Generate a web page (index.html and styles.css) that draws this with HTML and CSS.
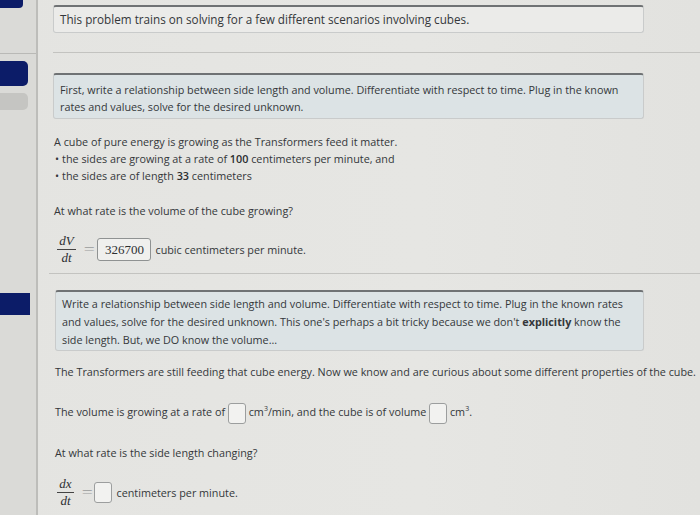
FILE: index.html
```html
<!DOCTYPE html>
<html>
<head>
<meta charset="utf-8">
<link rel="stylesheet" href="styles.css">
</head>
<body>
<div class="page">
  <nav class="sidebar">
    <div class="tab tab-top"></div>
    <div class="side-rule"></div>
    <div class="tab tab-active"></div>
    <div class="tab tab-grey"></div>
    <div class="tab tab-current"></div>
  </nav>
  <main class="content">
    <section class="part part-intro">
      <div class="box intro">This problem trains on solving for a few different scenarios involving cubes.</div>
    </section>
    <hr class="divider divider-1">
    <section class="part part-one">
      <div class="box hint">First, write a relationship between side length and volume. Differentiate with respect to time. Plug in the known rates and values, solve for the desired unknown.</div>
      <div class="text">
        <p class="line">A cube of pure energy is growing as the Transformers feed it matter.</p>
        <ul class="bullets">
          <li>the sides are growing at a rate of <b class="num">100</b> centimeters per minute, and</li>
          <li>the sides are of length <b class="num">33</b> centimeters</li>
        </ul>
        <p class="question">At what rate is the volume of the cube growing?</p>
        <div class="answer">
          <span class="frac"><span class="numr">dV</span><span class="den">dt</span></span>
          <span class="eq">=</span>
          <span class="input filled">326700</span>
          <span class="unit">cubic centimeters per minute.</span>
        </div>
      </div>
    </section>
    <hr class="divider divider-2">
    <section class="part part-two">
      <div class="box hint hint-2">Write a relationship between side length and volume. Differentiate with respect to time. Plug in the known rates<br>and values, solve for the desired unknown. This one's perhaps a bit tricky because we don't <strong class="em">explicitly</strong> know the<br>side length. But, we DO know the volume...</div>
      <p class="line line-2">The Transformers are still feeding that cube energy. Now we know and are curious about some different properties of the cube.</p>
      <p class="given">The volume is growing at a rate of <span class="input empty"></span> cm<sup>3</sup>/min, and the cube is of volume <span class="input empty"></span> cm<sup>3</sup>.</p>
      <p class="question q-2">At what rate is the side length changing?</p>
      <div class="answer answer-2">
        <span class="frac"><span class="numr">dx</span><span class="den">dt</span></span>
        <span class="eq">=</span>
        <span class="input empty"></span>
        <span class="unit">centimeters per minute.</span>
      </div>
    </section>
  </main>
</div>
</body>
</html>
```

FILE: styles.css
```css
* { box-sizing: border-box; }
html, body { margin: 0; padding: 0; }
body {
  width: 700px;
  height: 515px;
  overflow: hidden;
  background: #e3e3e0;
  font-family: "Open Sans", "Noto Sans", sans-serif;
  font-size: 10.8px;
  color: #34373a;
}
.page {
  display: flex;
  height: 515px;
  background: linear-gradient(90deg, #e4e4e1 0%, #e6e6e3 60%, #e2e2df 100%);
}
.sidebar {
  width: 38px;
  flex: none;
  background: #dadad7;
  border-right: 2px solid #bdbdba;
  display: flex;
  flex-direction: column;
}
.tab { background: #0c1c68; flex: none; }
.tab-top { width: 23px; height: 8px; border-radius: 0 0 4px 0; }
.side-rule { height: 1px; background: #b9b9b6; margin-top: 45px; flex: none; }
.tab-active { width: 28px; height: 25px; margin-top: 7px; border-radius: 0 5px 5px 0; }
.tab-grey { width: 28px; height: 17px; margin-top: 7px; border-radius: 0 5px 5px 0; background: #c5c5c2; }
.tab-current { width: 30px; height: 22px; margin-top: 183px; }

.content {
  flex: 1;
  padding: 5px 0 0 15px;
}
.box {
  width: 591px;
  border: 1px solid #c9cbcb;
  border-top: 2px solid #6f7274;
  border-radius: 3px;
  line-height: 17px;
}
.intro {
  background: #ebebe9;
  padding: 4px 6px 4px 6px;
  height: 28px;
  font-size: 11.7px;
}
.divider {
  border: 0;
  height: 1px;
  background: #c3c3c0;
  margin: 19px 0 0 0;
}
.divider-2 { margin: 9px 0 0 -4px; }
.hint {
  background: #dce3e5;
  padding: 6px 6px 5px 6px;
  margin-top: 20px;
  height: 46px;
}
.text { padding-left: 1px; }
p { margin: 0; }
.line { margin-top: 14px; line-height: 17px; }
.bullets {
  margin: 0;
  padding: 0 0 0 1px;
  list-style: none;
  line-height: 17px;
}
.bullets li::before {
  content: "\2022";
  margin-right: 3px;
}
.num { font-weight: 600; color: #2b2d30; }
.question { margin-top: 18px; line-height: 17px; }
.answer {
  display: flex;
  align-items: center;
  margin-top: 15px;
  padding-left: 2px;
  height: 30px;
}
.frac {
  display: inline-flex;
  flex-direction: column;
  align-items: center;
  font-family: "Liberation Serif", "Times New Roman", serif;
  font-style: italic;
  font-size: 13px;
  line-height: 14px;
  width: 21px;
  color: #2d2f32;
}
.numr { border-bottom: 1px solid #444; padding: 0 2px 1px; }
.den { padding-top: 1px; }
.eq {
  font-family: "Liberation Serif", serif;
  color: #9a9c9c;
  font-size: 15px;
  margin: 0 4px 0 8px;
  transform: scaleX(1.3);
}
.input {
  display: inline-block;
  border: 1px solid #8f9292;
  border-radius: 3px;
  background: #f0f0ee;
  vertical-align: middle;
}
.filled {
  font-family: "Liberation Serif", "Times New Roman", serif;
  font-size: 13px;
  padding: 2px 3px;
  height: 23px;
  line-height: 18px;
  width: 54px;
  text-align: center;
  color: #2d2f32;
}
.empty {
  width: 18px;
  height: 21px;
  background: #f2f2f0;
  border-color: #9c9e9e;
}
.unit { margin-left: 4px; }
.hint-2 {
  margin-top: 16px;
  height: 61px;
  line-height: 18px;
  padding: 3px 6px 2px;
  width: 589px;
  margin-left: 2px;
}
.em { font-weight: 700; }
.line-2 { margin-top: 12px; padding-left: 2px; }
.given {
  margin-top: 21px;
  padding-left: 2px;
  line-height: 22px;
}
.given sup { font-size: 7px; vertical-align: 5px; line-height: 0; }
.q-2 { margin-top: 20px; padding-left: 2px; }
.answer-2 { margin-top: 17px; }
.answer-2 .eq { margin: 0 3px 0 7px; }
```
